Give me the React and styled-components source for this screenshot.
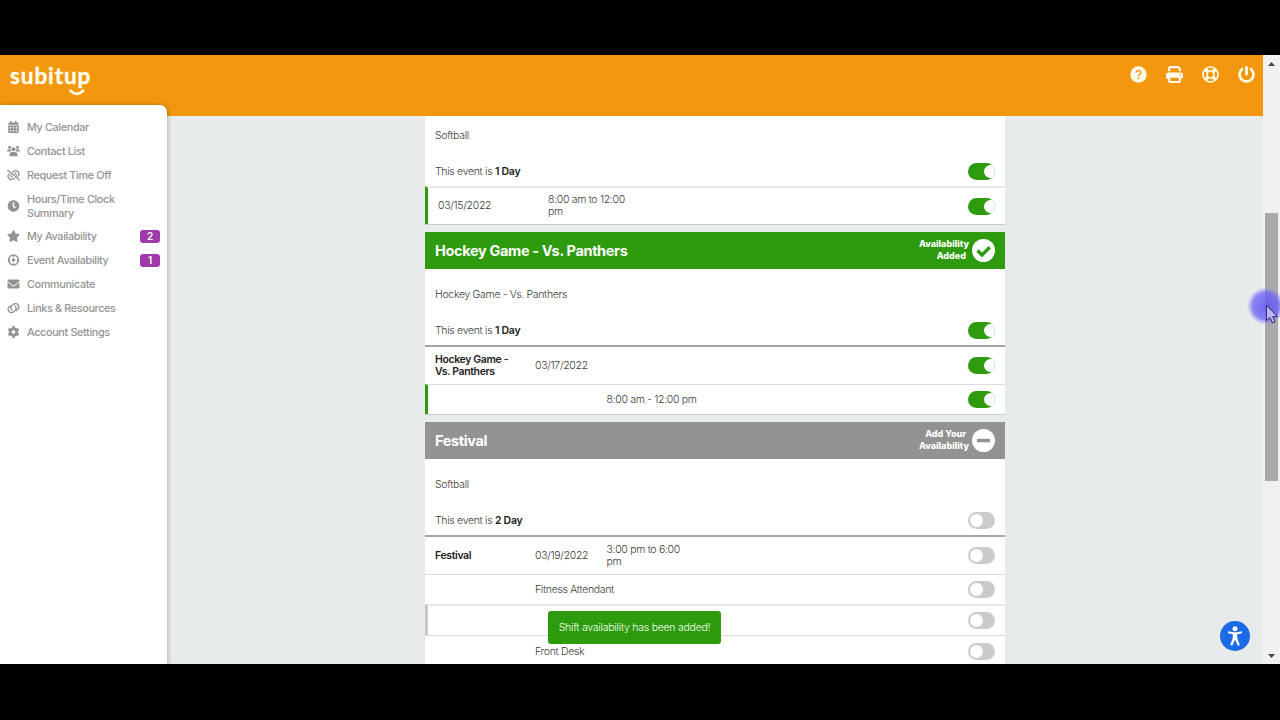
import React from 'react'
import styled, { createGlobalStyle } from 'styled-components'
import {
  FaCalendarAlt, FaClock, FaStar, FaEnvelope, FaCog,
  FaRegLifeRing, FaPowerOff
} from 'react-icons/fa'
import { FaPrint } from 'react-icons/fa6'

var c_orange = '#F3970F'
var c_green = '#2E9B0F'
var c_grey = '#939393'
var c_purple = '#A03AAB'

const GlobalStyle = createGlobalStyle`
  * { box-sizing: border-box; }
  body {
    margin: 0;
    background: #000;
    font-family: Inter, 'Liberation Sans', sans-serif;
    overflow: hidden;
  }
`

const Page = styled.div`
  width: 1280px;
  height: 720px;
  padding: 55px 0 56px;
  background: #000;
`
const Screen = styled.div`
  position: relative;
  display: flex;
  height: 609px;
  background: #E7EBEB;
  overflow: hidden;
`
const Site = styled.div`
  display: flex;
  flex-direction: column;
  width: 1263px;
`
const TopBar = styled.header`
  display: flex;
  justify-content: space-between;
  align-items: flex-start;
  flex: none;
  height: 61px;
  padding: 6px 8px 0 10px;
  background: ${c_orange};
`
const Logo = styled.div`
  display: flex;
  flex-direction: column;
  width: 84px;
  color: #FFFDEB;
  font-family: Lato, sans-serif;
  font-size: 22.5px;
  line-height: 30px;
  font-weight: 700;
  letter-spacing: 0.9px;
  -webkit-text-stroke: 0.4px #FFFDEB;
  svg {
    margin: -2px 0 0 58px;
  }
`
const Tools = styled.div`
  display: flex;
  gap: 19px;
  padding-top: 4.500px;
  color: #FFFDEB;
  svg {
    display: block;
    width: 17px;
    height: 17px;
  }
`
const Body = styled.div`
  display: flex;
  height: 548px;
`
const SideBar = styled.nav`
  z-index: 1;
  flex: none;
  width: 167px;
  margin-top: -11px;
  padding: 10px 7px 0;
  background: #fff;
  border-radius: 0 7px 0 0;
  box-shadow: 1px 0 4px rgba(0,0,0,0.25);
`
const NavItem = styled.a`
  display: flex;
  align-items: center;
  min-height: 24px;
  padding: 5px 0;
  color: ${c_grey};
  font-size: 10.8px;
  font-weight: 550;
  line-height: 13.5px;
  svg {
    flex: none;
    width: 13px;
    height: 12px;
    margin-right: 7px;
  }
  span {
    flex: 1;
    padding-top: 1px;
    margin-bottom: -1px;
    white-space: pre-line;
    letter-spacing: -0.34px;
  }
`
const Count = styled.b`
  flex: none;
  width: 20px;
  height: 13px;
  border-radius: 3px;
  background: ${c_purple};
  color: #fff;
  font-size: 10px;
  font-weight: 600;
  line-height: 13px;
  text-align: center;
`
const Main = styled.main`
  flex: 1;
  padding-left: 258px;
  overflow: hidden;
`
const Feed = styled.div`
  width: 580px;
  margin-top: -6px;
`
const Card = styled.section`
  margin-bottom: 7px;
  background: #fff;
  border-bottom: 1px solid #C9CCCC;
  color: #3C3C3C;
  font-size: 10.5px;
  font-weight: 300;
  letter-spacing: -0.32px;
  line-height: 12px;
`
const CardHead = styled.div`
  display: flex;
  align-items: center;
  height: 37px;
  padding: 0 10px;
  background: ${p => p.$added ? c_green : c_grey};
  color: #fff;
  h2 {
    flex: 1;
    margin: 0;
    font-size: 14.5px;
    font-weight: 750;
    line-height: 20px;
    letter-spacing: -0.35px;
  }
`
const Status = styled.div`
  display: flex;
  flex-direction: column;
  align-items: flex-end;
  margin: -1px 3px 0 0;
  font-size: 9px;
  font-weight: 800;
  line-height: 12px;
  letter-spacing: 0;
`
const StatusLine = styled.span`
  padding-right: ${p => p.$short ? 3 : 0}px;
`
const Description = styled.p`
  height: 46px;
  margin: 0;
  padding: 20px 10px 0;
`
const Summary = styled.div`
  display: flex;
  align-items: center;
  justify-content: space-between;
  height: 30px;
  padding: 0 10px;
  span {
    padding-top: 2px;
  }
  b {
    color: #222;
    font-weight: 600;
    letter-spacing: -0.25px;
  }
`
const Row = styled.div`
  display: grid;
  grid-template-columns: ${p => p.$columns || '100px 71.5px 1fr 27px'};
  align-items: center;
  height: ${p => p.$height}px;
  padding: 0 10px 0 ${p => p.$mark ? 7 : 10}px;
  border-top: ${p => p.$line || '1px solid #DCDCDC'};
  border-left: ${p => p.$mark ? '3px solid ' + p.$mark : 'none'};
  span, b {
    padding-top: ${p => p.$height > 35 ? 0 : 1}px;
    white-space: pre;
  }
  b {
    color: #222;
    font-weight: 600;
    letter-spacing: -0.37px;
  }
`
const Switch = styled.i`
  display: flex;
  justify-content: ${p => p.$on ? 'flex-end' : 'flex-start'};
  flex: none;
  width: 27px;
  height: 17px;
  padding: 2px;
  border-radius: 9px;
  background: ${p => p.$on ? c_green : '#CBCBCB'};
  overflow: hidden;
  &::after {
    content: '';
    flex: none;
    width: 13px;
    height: 13px;
    border-radius: 50%;
    background: #fff;
    margin-right: ${p => p.$on ? -4 : 0}px;
    box-shadow: ${p => p.$on ? '2px 0 0 #fff' : 'none'};
  }
`
const Toast = styled.div`
  position: absolute;
  left: 548px;
  top: 556px;
  width: 173px;
  height: 33px;
  border-radius: 3px;
  background: ${c_green};
  color: #F2FFE9;
  font-size: 10.5px;
  font-weight: 300;
  letter-spacing: -0.25px;
  line-height: 34px;
  text-align: center;
  white-space: nowrap;
`
const AccessButton = styled.div`
  position: absolute;
  left: 1220px;
  top: 566px;
  width: 30px;
  height: 30px;
  border-radius: 50%;
  background: #1C6BE4;
  svg { display: block; }
`
const ScrollBar = styled.div`
  display: flex;
  flex-direction: column;
  align-items: center;
  width: 17px;
  background: #F1F1F1;
  svg { display: block; }
`
const Track = styled.div`
  flex: 1;
  width: 13px;
  padding-top: 141px;
`
const Thumb = styled.div`
  height: 268px;
  background: #A9A9A9;
`
const Pointer = styled.div`
  position: absolute;
  left: 1246px;
  top: 233px;
  width: 34px;
  height: 38px;
  overflow: hidden;
`

const HelpIcon = () => (
  <svg viewBox="0 0 17 17">
    <circle cx="8.500" cy="8.500" r="8.200" fill="currentColor" />
    <path d="M6.200 6.800C6.200 3.700 10.900 3.800 10.900 6.500C10.900 8.200 8.500 8.300 8.500 10.200" fill="none" stroke={c_orange} strokeWidth="1.400" />
    <circle cx="8.500" cy="12.300" r="0.950" fill={c_orange} />
  </svg>
)

const PeopleIcon = () => (
  <svg viewBox="0 0 26 24" fill="currentColor">
    <circle cx="5" cy="4.500" r="3" />
    <circle cx="21" cy="4.500" r="3" />
    <circle cx="13" cy="8.500" r="4" />
    <path d="M0 13C0 10 2 8.500 4.500 8.500H7.500C7.500 10.500 8 12 9 13Z" />
    <path d="M26 13C26 10 24 8.500 21.500 8.500H18.500C18.500 10.500 18 12 17 13Z" />
    <path d="M5 22.500V19.500C5 16 7.500 14 10 14H16C18.500 14 21 16 21 19.500V22.500Z" />
  </svg>
)

const LinkIcon = ({ broken }) => (
  <svg viewBox="0 0 26 24" fill="none" stroke="currentColor" strokeWidth="2.600" strokeLinecap="round">
    <path d="M10 16.5C6.500 13.500 7 10 9.500 7.500L12 5.500C15 3 19.500 3 22 5.500C25 9 24 12.500 21.500 15L18.500 17.500" />
    <path d="M16 8C19.500 11 19 14.500 16.500 17L14 19C11 21.500 6.500 21.500 4 19C1 15.500 2 12 4.500 9.500L6.500 8" />
    {broken ? <path d="M1.500 3L24.500 22" stroke="#fff" strokeWidth="5" /> : null}
    {broken ? <path d="M1.500 2.500L24.500 21.500" /> : null}
  </svg>
)

const BallIcon = () => (
  <svg viewBox="0 0 24 24" fill="none" stroke="currentColor" strokeWidth="2.800">
    <circle cx="12" cy="12" r="10" />
    <path d="M12 8L15.800 10.800L14.400 15.200H9.600L8.200 10.800Z" fill="currentColor" stroke="none" />
    <path d="M8.500 3L12 5L15.500 3M3 10.500L5 12L4.500 16M21 10.500L19 12L19.500 16M9 21L10.500 20H13.500L15 21" strokeWidth="1.900" />
  </svg>
)

const StatusIcon = ({ added }) => (
  <svg width="23" height="23" viewBox="0 0 23 23">
    <circle cx="11.500" cy="11.500" r="11.500" fill="#fff" />
    {added
      ? <path d="M5.500 11.500L10 16L17.800 8.200" fill="none" stroke={c_green} strokeWidth="3.400" />
      : <rect x="5" y="9.700" width="13" height="3.600" rx="0.500" fill={c_grey} />}
  </svg>
)

const navItems = [
  { icon: <FaCalendarAlt />, label: 'My Calendar' },
  { icon: <PeopleIcon />, label: 'Contact List' },
  { icon: <LinkIcon broken />, label: 'Request Time Off' },
  { icon: <FaClock />, label: 'Hours/Time Clock\nSummary' },
  { icon: <FaStar />, label: 'My Availability', count: 2 },
  { icon: <BallIcon />, label: 'Event Availability', count: 1 },
  { icon: <FaEnvelope />, label: 'Communicate' },
  { icon: <LinkIcon />, label: 'Links & Resources' },
  { icon: <FaCog />, label: 'Account Settings' }
]

const EventSummary = ({ text, days, on }) => (
  <div>
    <Description>{text}</Description>
    <Summary>
      <span>This event is <b>{days} Day</b></span>
      <Switch $on={on} />
    </Summary>
  </div>
)

const App = () => (
  <Page>
    <GlobalStyle />
    <Screen>
      <Site>
        <TopBar>
          <Logo>
            subitup
            <svg width="18" height="8" viewBox="0 0 18 8" fill="none" stroke="currentColor" strokeWidth="2.800" strokeLinecap="round">
              <path d="M2.500 1.700Q9 8 15 1.700" />
            </svg>
          </Logo>
          <Tools>
            <HelpIcon />
            <FaPrint />
            <FaRegLifeRing />
            <FaPowerOff />
          </Tools>
        </TopBar>
        <Body>
          <SideBar>
            {navItems.map(item => (
              <NavItem key={item.label}>
                {item.icon}
                <span>{item.label}</span>
                {item.count ? <Count>{item.count}</Count> : null}
              </NavItem>
            ))}
          </SideBar>
          <Main>
            <Feed>
              <Card>
                <EventSummary text="Softball" days={1} on />
                <Row $height={38} $mark={c_green} $line="2px solid #E8E8E8" $columns="3px 110px 1fr 27px">
                  <i />
                  <span>03/15/2022</span>
                  <span>{'8:00 am to 12:00\npm'}</span>
                  <Switch $on />
                </Row>
              </Card>
              <Card>
                <CardHead $added>
                  <h2>Hockey Game - Vs. Panthers</h2>
                  <Status>
                    <StatusLine>Availability</StatusLine>
                    <StatusLine $short>Added</StatusLine>
                  </Status>
                  <StatusIcon added />
                </CardHead>
                <EventSummary text="Hockey Game - Vs. Panthers" days={1} on />
                <Row $height={39} $line="2px solid #A5A5A5">
                  <b>{'Hockey Game -\nVs. Panthers'}</b>
                  <span>03/17/2022</span>
                  <i />
                  <Switch $on />
                </Row>
                <Row $height={30} $mark={c_green}>
                  <i />
                  <i />
                  <span>8:00 am - 12:00 pm</span>
                  <Switch $on />
                </Row>
              </Card>
              <Card>
                <CardHead>
                  <h2>Festival</h2>
                  <Status>
                    <StatusLine $short>Add Your</StatusLine>
                    <StatusLine>Availability</StatusLine>
                  </Status>
                  <StatusIcon />
                </CardHead>
                <EventSummary text="Softball" days={2} />
                <Row $height={39} $line="2px solid #A5A5A5">
                  <b>Festival</b>
                  <span>03/19/2022</span>
                  <span>{'3:00 pm to 6:00\npm'}</span>
                  <Switch />
                </Row>
                <Row $height={30}>
                  <i />
                  <span>Fitness Attendant</span>
                  <i />
                  <Switch />
                </Row>
                <Row $height={31} $mark="#C8C8C8" $line="2px solid #E8E8E8">
                  <i />
                  <i />
                  <i />
                  <Switch />
                </Row>
                <Row $height={31}>
                  <i />
                  <span>Front Desk</span>
                  <i />
                  <Switch />
                </Row>
              </Card>
            </Feed>
          </Main>
        </Body>
      </Site>
      <ScrollBar>
        <svg width="17" height="17" viewBox="0 0 17 17"><path d="M5 11L8.500 7L12 11Z" fill="#444" /></svg>
        <Track><Thumb /></Track>
        <svg width="17" height="17" viewBox="0 0 17 17"><path d="M5 7L8.500 11L12 7Z" fill="#444" /></svg>
      </ScrollBar>
      <Toast>Shift availability has been added!</Toast>
      <AccessButton>
        <svg width="30" height="30" viewBox="0 0 30 30" fill="#fff">
          <circle cx="15" cy="7.700" r="2.500" />
          <path d="M8 10.300L13.500 11.300H16.500L22 10.300V12.200L17.200 13.300V17L19.800 24L17.900 24.800L15 18.800L12.100 24.800L10.200 24L12.800 17V13.300L8 12.200Z" />
        </svg>
      </AccessButton>
      <Pointer>
        <svg width="34" height="38" viewBox="0 0 34 38">
          <defs>
            <radialGradient id="halo">
              <stop offset="0" stopColor="#5A50F5" stopOpacity="0.850" />
              <stop offset="0.700" stopColor="#6960F5" stopOpacity="0.750" />
              <stop offset="1" stopColor="#8880F5" stopOpacity="0" />
            </radialGradient>
          </defs>
          <circle cx="20" cy="18" r="19" fill="url(#halo)" />
          <path d="M20.500 17.500V32.500L24 29.500L26.500 35L29 34L26.800 28.500H31.500Z" fill="#B9B5F7" stroke="#34316B" strokeWidth="1" />
        </svg>
      </Pointer>
    </Screen>
  </Page>
)

export default App
